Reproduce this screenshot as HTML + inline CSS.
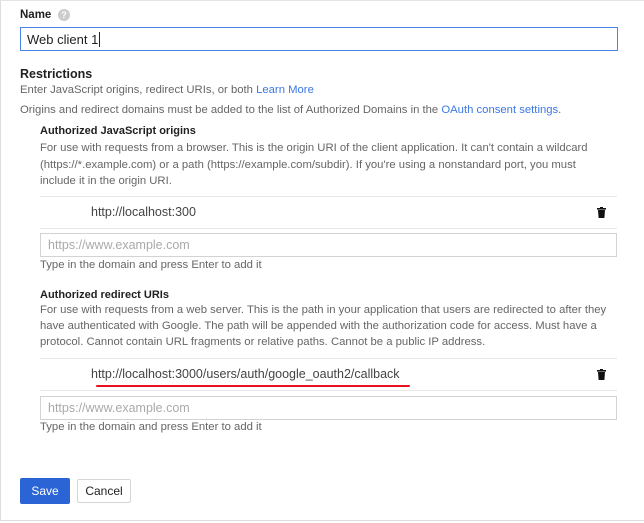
<!DOCTYPE html>
<html><head><style>
*{margin:0;padding:0;box-sizing:border-box}
body{width:644px;height:523px;background:#fff;font-family:"Liberation Sans",sans-serif;position:relative;overflow:hidden;color:#212121}
.frame{position:absolute;left:0;top:0;width:644px;height:521px;border:1px solid #ddd;border-top:1px solid #e4e4e4;border-right:none}
.a{position:absolute;white-space:nowrap}
.g{color:#666;font-size:11.3px}
.b{font-weight:bold;font-size:11px;color:#212121}
.l{color:#3b78e7}
.hr{position:absolute;left:40px;width:577px;height:1px;background:#e6e6e6}
.inp{position:absolute;left:40px;width:577px;height:24px;border:1px solid #d3d3d3;color:#aaa;font-size:12.5px;padding:4px 7px}
.trash{position:absolute;width:9px;height:11px}
</style></head><body>
<div class="frame"></div>
<div class="a" style="left:20px;top:9px;font-size:11.5px;font-weight:bold">Name</div>
<div class="a" style="left:58px;top:9px;width:12px;height:12px;border-radius:50%;background:#ccc;color:#fff;font-size:9px;text-align:center;line-height:12px;font-weight:bold">?</div>
<div class="a" style="left:20px;top:27px;width:598px;height:24px;border:1px solid #4a86e8;font-size:13px;padding:4px 6px;color:#222">Web client 1<span style="border-left:1px solid #222;margin-left:1px"></span></div>
<div class="a" style="left:20px;top:67px;font-size:12.5px;font-weight:bold;color:#222">Restrictions</div>
<div class="a g" style="left:20px;top:84px">Enter JavaScript origins, redirect URIs, or both <span class="l">Learn More</span></div>
<div class="a g" style="left:20px;top:104px">Origins and redirect domains must be added to the list of Authorized Domains in the <span class="l">OAuth consent settings</span>.</div>
<div class="a b" style="left:40px;top:125px">Authorized JavaScript origins</div>
<div class="a g" style="left:40px;top:140px;line-height:16.5px">For use with requests from a browser. This is the origin URI of the client application. It can't contain a wildcard<br>(https://*.example.com) or a path (https://example.com/subdir). If you're using a nonstandard port, you must<br>include it in the origin URI.</div>
<div class="hr" style="top:196px"></div>
<div class="a" style="left:91px;top:205px;font-size:12.5px;color:#444">http://localhost:300</div>
<svg class="trash" style="left:597px;top:207px" viewBox="0 0 9 11"><rect x="0" y="1" width="9" height="1.6" fill="#111"/><rect x="3" y="0" width="3" height="1.5" fill="#111"/><path d="M1 3h7l-.6 8H1.6z" fill="#111"/></svg>
<div class="hr" style="top:228px"></div>
<div class="inp" style="top:233px">https://www.example.com</div>
<div class="a g" style="left:40px;top:259px">Type in the domain and press Enter to add it</div>
<div class="a b" style="left:40px;top:289px">Authorized redirect URIs</div>
<div class="a g" style="left:40px;top:302px;line-height:16.2px">For use with requests from a web server. This is the path in your application that users are redirected to after they<br>have authenticated with Google. The path will be appended with the authorization code for access. Must have a<br>protocol. Cannot contain URL fragments or relative paths. Cannot be a public IP address.</div>
<div class="hr" style="top:358px"></div>
<div class="a" style="left:91px;top:367px;font-size:12.5px;color:#444">http://localhost:3000/users/auth/google_oauth2/callback</div>
<div class="a" style="left:96px;top:385px;width:314px;height:2px;background:#e8101e;border-radius:1px"></div>
<svg class="trash" style="left:597px;top:369px" viewBox="0 0 9 11"><rect x="0" y="1" width="9" height="1.6" fill="#111"/><rect x="3" y="0" width="3" height="1.5" fill="#111"/><path d="M1 3h7l-.6 8H1.6z" fill="#111"/></svg>
<div class="hr" style="top:390px"></div>
<div class="inp" style="top:396px">https://www.example.com</div>
<div class="a g" style="left:40px;top:421px">Type in the domain and press Enter to add it</div>
<div class="a" style="left:20px;top:478px;width:50px;height:26px;background:#2b64d4;border-radius:2px;color:#fff;font-size:12px;text-align:center;line-height:26px">Save</div>
<div class="a" style="left:77px;top:479px;width:54px;height:24px;border:1px solid #d6d6d6;border-radius:2px;color:#222;font-size:12px;text-align:center;line-height:22px">Cancel</div>
</body></html>
